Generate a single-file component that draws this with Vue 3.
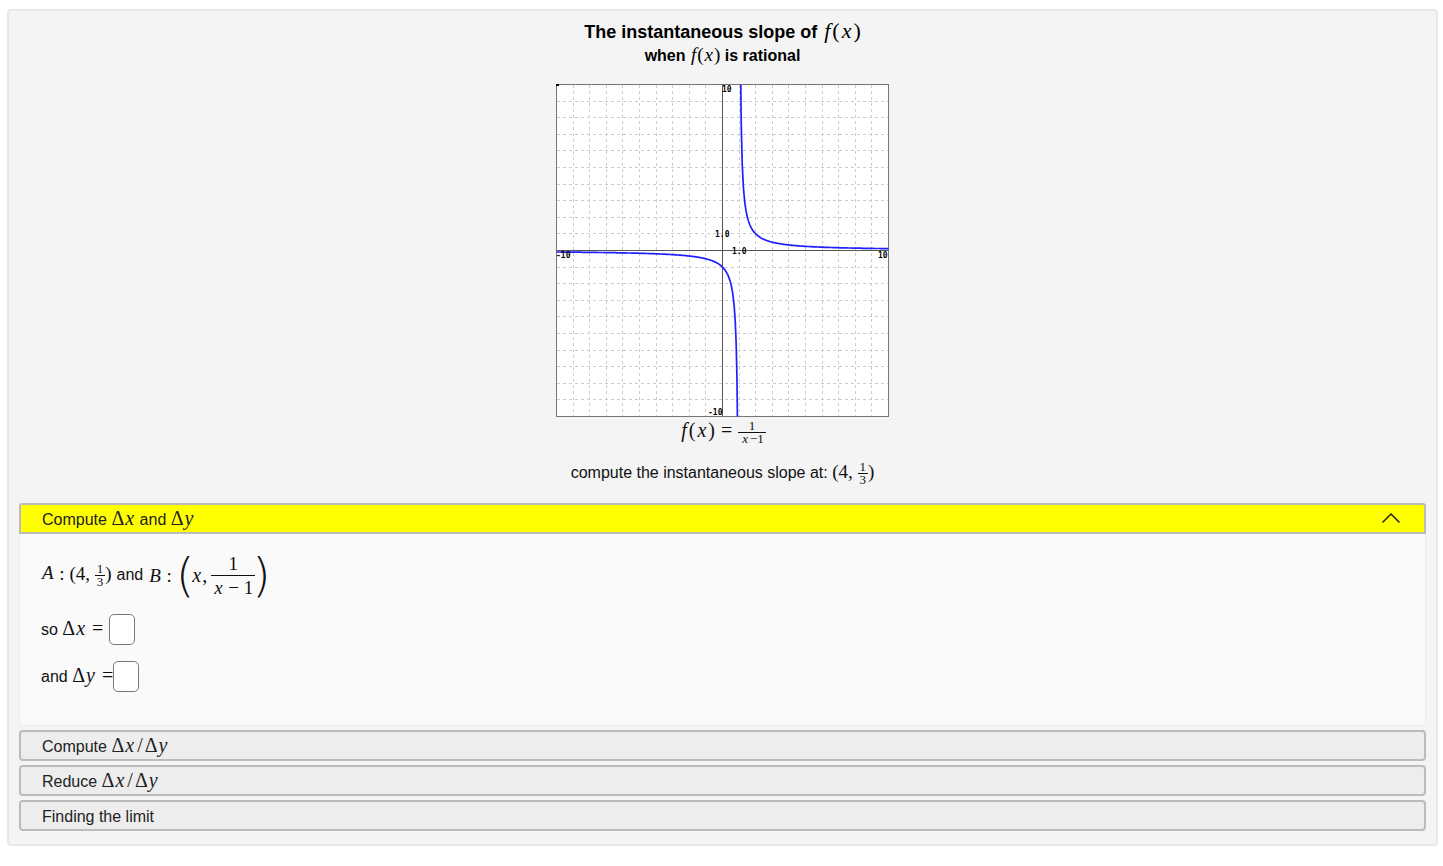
<script setup>
import { ref } from 'vue'

const open = ref('deltas')
const dx = ref('')
const dy = ref('')

const toggle = (id) => {
  open.value = open.value === id ? '' : id
}

const center = 166.5
const unit = 16.6
const gridLines = Array.from({ length: 19 }, (_, i) => i - 9)
  .filter((n) => n !== 0)
  .map((n) => Math.round(center + n * unit - 0.5) + 0.5)

const branch = (from, to) => {
  const points = []
  for (let i = 0; i <= 400; i++) {
    const x = from + ((to - from) * i) / 400
    const y = 1 / (x - 1)
    points.push(`${(center + x * unit).toFixed(1)},${(center - y * unit).toFixed(1)}`)
  }
  return points.join(' ')
}
const leftBranch = branch(-10, 0.9)
const rightBranch = branch(1.1, 10)
</script>

<template>
  <main class="card">
    <header class="intro">
      <h1>The instantaneous slope of <span class="math"><i>f</i>(<i>x</i>)</span></h1>
      <h2>when <span class="math"><i>f</i>(<i>x</i>)</span> is rational</h2>
      <svg class="graph" viewBox="0 0 333 333" role="img" aria-label="Graph of 1/(x-1)">
        <rect x="0.5" y="0.5" width="332" height="332" fill="#fff" />
        <g class="grid">
          <line v-for="p in gridLines" :key="'v' + p" :x1="p" :x2="p" y1="1" y2="332" />
          <line v-for="p in gridLines" :key="'h' + p" :y1="p" :y2="p" x1="1" x2="332" />
        </g>
        <path class="axis" d="M166.500 0V333M0 166.500H333" />
        <rect class="frame" x="0.5" y="0.5" width="332" height="332" />
        <rect x="0" y="0" width="3" height="2" fill="#000" />
        <polyline class="curve" :points="leftBranch" />
        <polyline class="curve" :points="rightBranch" />
        <text x="166" y="8">10</text>
        <text x="159" y="153">1.0</text>
        <text x="176" y="170">1.0</text>
        <text x="0" y="174">-10</text>
        <text x="322" y="174">10</text>
        <text x="152" y="331">-10</text>
      </svg>
      <p class="formula">
        <span class="math"><i>f</i>(<i>x</i>)<span class="rel">=</span><span class="frac"><span>1</span><span><i>x</i>−1</span></span></span>
      </p>
      <p class="task">
        compute the instantaneous slope at:
        <span class="math">(4, <span class="frac"><span>1</span><span>3</span></span>)</span>
      </p>
    </header>

    <section class="steps">
      <button type="button" class="step" :class="{ active: open === 'deltas' }" :aria-expanded="open === 'deltas'" @click="toggle('deltas')">
        <span class="title">Compute <span class="math">Δ<i>x</i></span> and <span class="math">Δ<i>y</i></span></span>
        <svg v-if="open === 'deltas'" class="chevron" viewBox="0 0 20 12" aria-hidden="true">
          <path d="M1.500 10.500L10 2L18.500 10.500" />
        </svg>
      </button>
      <div v-if="open === 'deltas'" class="panel">
        <p class="points">
          <span class="math"><i>A</i> : (4, <span class="frac"><span>1</span><span>3</span></span>)</span>
          <span>and</span>
          <span class="math"><i>B</i> :</span>
          <span class="math pair"><span class="paren">(</span><span><i>x</i>,</span><span class="frac display"><span>1</span><span><i>x</i> − 1</span></span><span class="paren">)</span></span>
        </p>
        <p class="answer">
          <label for="dx">so <span class="math">Δ<i>x</i><span class="rel">=</span></span></label>
          <input id="dx" v-model="dx" type="text" />
        </p>
        <p class="answer">
          <label for="dy">and <span class="math">Δ<i>y</i><span class="rel last">=</span></span></label>
          <input id="dy" v-model="dy" type="text" />
        </p>
      </div>
      <button type="button" class="step" :aria-expanded="false">
        <span class="title">Compute <span class="math">Δ<i>x</i><span class="slash">/</span>Δ<i>y</i></span></span>
      </button>
      <button type="button" class="step" :aria-expanded="false">
        <span class="title">Reduce <span class="math">Δ<i>x</i><span class="slash">/</span>Δ<i>y</i></span></span>
      </button>
      <button type="button" class="step" :aria-expanded="false">
        <span class="title">Finding the limit</span>
      </button>
    </section>
  </main>
</template>

<style>
body {
  margin: 0;
  background: #fff;
}
</style>

<style scoped>
.card {
  margin: 9px 5px 20px 7px;
  padding: 9px 10px 13px;
  border: 2px solid #e8e8e8;
  border-radius: 4px;
  background: #f4f4f4;
  color: #111;
  font: 16px/24px "Liberation Sans", Arial, sans-serif;
}
h1, h2, p {
  margin: 0;
}
.intro {
  display: flex;
  flex-direction: column;
  align-items: center;
}
h1 {
  font-size: 18px;
  line-height: 24px;
  color: #000;
}
h2 {
  font-size: 16px;
  line-height: 24px;
  color: #000;
}
.math {
  font-family: "Liberation Serif", "Times New Roman", serif;
  font-size: 20px;
  font-weight: 400;
  line-height: 1;
  white-space: nowrap;
}
.math i {
  margin: 0 1px;
}
h1 .math {
  font-size: 22px;
}
h1 .math i {
  margin: 0 2px;
}
h2 .math {
  font-size: 19px;
}
.formula .math i {
  margin: 0 2px;
}
.task .math {
  font-size: 19px;
}
.rel {
  margin: 0 6px;
}
.rel.last {
  margin-right: 0;
}
.slash {
  margin: 0 2px;
}
.graph {
  width: 333px;
  height: 333px;
  margin-top: 16px;
}
.grid line {
  stroke: #ccc;
  stroke-dasharray: 3 3;
}
.axis {
  fill: none;
  stroke: #555;
}
.frame {
  fill: none;
  stroke: #777;
}
.curve {
  fill: none;
  stroke: #2020ff;
  stroke-width: 1.7px;
}
.graph text {
  font: bold 8px "DejaVu Sans Mono", monospace;
  fill: #000;
}
.frac {
  display: inline-flex;
  flex-direction: column;
  align-items: center;
  vertical-align: middle;
  font-size: 13px;
  line-height: 12px;
}
.frac > span {
  padding: 0 2px;
}
.frac > span:first-child {
  align-self: stretch;
  text-align: center;
  border-bottom: 1px solid #111;
}
.formula {
  height: 28px;
  padding-top: 1px;
  line-height: 28px;
}
.task {
  margin-top: 13px;
  height: 28px;
  line-height: 28px;
}
.steps {
  display: flex;
  flex-direction: column;
  gap: 4px;
  margin-top: 16px;
}
.step {
  display: flex;
  align-items: center;
  justify-content: space-between;
  height: 31px;
  box-sizing: border-box;
  padding: 0 23px 0 21px;
  border: 2px solid #bbb;
  border-radius: 4px;
  background: #ededed;
  color: #222;
  font: inherit;
  text-align: left;
}
.step.active {
  margin-bottom: -4px;
  border-radius: 3px 3px 0 0;
  background: #ff0;
}
.title {
  padding-top: 2px;
}
.chevron {
  width: 20px;
  height: 12px;
  margin-bottom: 2px;
  fill: none;
  stroke: #222;
  stroke-width: 1.5px;
}
.panel {
  display: flex;
  flex-direction: column;
  padding: 17px 21px 17px;
  border: 1px solid #ebebeb;
  border-top: 0;
  border-radius: 0 0 4px 4px;
  background: #fafafa;
}
.points {
  display: flex;
  align-items: center;
  gap: 5px;
  height: 48px;
  margin-bottom: 15px;
}
.points > .math:not(.pair) {
  font-size: 19px;
}
.pair {
  display: inline-flex;
  align-items: center;
  margin-left: 2px;
}
.paren {
  font-family: "DejaVu Sans", sans-serif;
  font-size: 47px;
  font-weight: 200;
  line-height: 48px;
  margin: 0 -3px;
}
.frac.display {
  margin-left: 4px;
  font-size: 19px;
  line-height: 23px;
}
.answer {
  display: flex;
  align-items: center;
  height: 31px;
  margin-bottom: 16px;
}
.answer input {
  width: 26px;
  height: 31px;
  box-sizing: border-box;
  padding: 4px;
  border: 1px solid #777;
  border-radius: 5px;
  background: #fff;
  font: inherit;
}
</style>
